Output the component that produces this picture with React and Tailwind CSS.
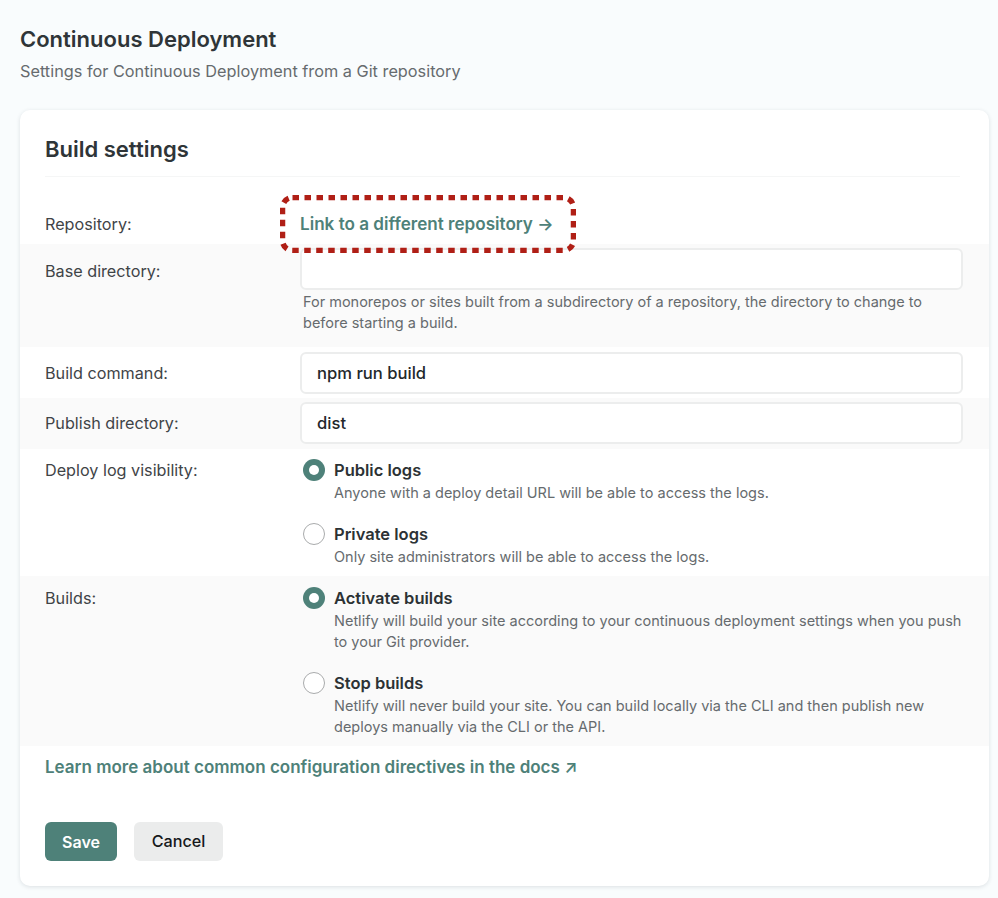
const font = { fontFamily: "Inter, sans-serif" };

function Row({ label, shaded, className = "", labelClassName = "", children }) {
  return (
    <div className={`-mx-[25px] flex px-[25px] ${shaded ? "bg-[#fafafa]" : ""} ${className}`}>
      <div className={`w-[255px] shrink-0 text-[16.2px] leading-[24px] text-[#3f4447] ${labelClassName}`}>{label}</div>
      <div className="min-w-0 flex-1">{children}</div>
    </div>
  );
}

function TextInput({ value }) {
  return (
    <div className="mr-[1px] h-[42px] rounded-[6px] border-2 border-[#eceded] bg-white px-[15px] text-[16.6px] font-medium leading-[38px] text-[#23282b]">
      {value}
    </div>
  );
}

function Radio({ checked, title, children, className = "" }) {
  return (
    <div className={`flex gap-[10px] pl-[2px] ${className}`}>
      {checked ? (
        <span className="ml-[1px] mr-[-1px] mt-[1px] flex h-[22px] w-[22px] shrink-0 items-center justify-center rounded-full bg-[#4e8179]">
          <span className="h-[10px] w-[10px] rounded-full bg-white" />
        </span>
      ) : (
        <span className="ml-[1px] mr-[-1px] mt-[1px] h-[22px] w-[22px] shrink-0 rounded-full border border-[#a9abac] bg-white" />
      )}
      <div className="min-w-0">
        <div className="text-[16.5px] font-semibold leading-[24px] text-[#2c3235]">{title}</div>
        <div className="text-[14.5px] leading-[21px] text-[#666b6e]">{children}</div>
      </div>
    </div>
  );
}

export default function App() {
  return (
    <div style={font} className="min-h-[898px] bg-[#f9fcfd] px-[20px] pb-[12px] pt-[24px]">
      <h1 className="text-[22px] font-semibold leading-[30px] text-[#2f3538]">Continuous Deployment</h1>
      <p className="mt-[5px] text-[16.3px] leading-[24px] text-[#666b6e]">Settings for Continuous Deployment from a Git repository</p>

      <div className="mt-[27px] h-[776px] w-[969px] rounded-[10px] bg-white px-[25px] pt-[23px] shadow-[0_1px_4px_rgba(40,60,70,0.14)]">
        <h2 className="mr-[4px] border-b border-[#f5f6f6] pb-[10px] text-[22px] font-semibold leading-[33px] text-[#2f3538]">Build settings</h2>

        <Row label="Repository:" className="relative h-[67px] items-start pt-[35px]">
          <a className="block text-[17.1px] font-semibold leading-[24px] text-[#4e8179]">
            Link to a different repository →
          </a>
          <svg className="pointer-events-none absolute left-[260px] top-[18px]" width="296" height="58" viewBox="0 0 296 58" fill="none">
            <rect x="2.5" y="2.5" width="291" height="53" rx="10" stroke="#b01f16" strokeWidth="5.5" strokeDasharray="6.5 5.5" />
          </svg>
        </Row>

        <Row label="Base directory:" labelClassName="pt-[11px]" shaded className="h-[103px] pt-[4px]">
          <TextInput value="" />
          <p className="mt-[1px] pl-[3px] pr-[20px] text-[14.5px] leading-[21px] text-[#666b6e]">
            For monorepos or sites built from a subdirectory of a repository, the directory to change to before starting a build.
          </p>
        </Row>

        <Row label="Build command:" className="h-[51px] items-center">
          <TextInput value="npm run build" />
        </Row>

        <Row label="Publish directory:" shaded className="h-[51px] items-center pb-[2px]">
          <TextInput value="dist" />
        </Row>

        <Row label="Deploy log visibility:" className="h-[127px] pt-[9px]">
          <Radio checked title="Public logs">Anyone with a deploy detail URL will be able to access the logs.</Radio>
          <Radio title="Private logs" className="mt-[19px]">Only site administrators will be able to access the logs.</Radio>
        </Row>

        <Row label="Builds:" shaded className="h-[170px] pt-[10px]">
          <Radio checked title="Activate builds">
            Netlify will build your site according to your continuous deployment settings when you push to your Git provider.
          </Radio>
          <Radio title="Stop builds" className="mt-[19px]">
            Netlify will never build your site. You can build locally via the CLI and then publish new deploys manually via the CLI or the API.
          </Radio>
        </Row>

        <a className="mt-[9px] block text-[17px] font-semibold leading-[24px] text-[#4e8179]">
          Learn more about common configuration directives in the docs ↗
        </a>

        <div className="mt-[43px] flex gap-[17px]">
          <button className="h-[39px] w-[72px] rounded-[6px] bg-[#4e8179] text-[16px] font-semibold text-white">Save</button>
          <button className="h-[39px] w-[89px] rounded-[6px] bg-[#ebecec] text-[16.2px] font-medium text-[#16191b]">Cancel</button>
        </div>
      </div>
    </div>
  );
}
